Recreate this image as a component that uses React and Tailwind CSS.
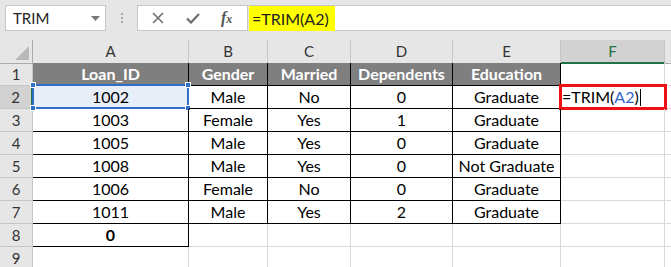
import { Fragment } from 'react'

const cols = ['A', 'B', 'C', 'D', 'E', 'F']

const rows = [
  ['Loan_ID', 'Gender', 'Married', 'Dependents', 'Education'],
  ['1002', 'Male', 'No', '0', 'Graduate'],
  ['1003', 'Female', 'Yes', '1', 'Graduate'],
  ['1005', 'Male', 'Yes', '0', 'Graduate'],
  ['1008', 'Male', 'Yes', '0', 'Not Graduate'],
  ['1006', 'Female', 'No', '0', 'Graduate'],
  ['1011', 'Male', 'Yes', '2', 'Graduate'],
  ['0'],
  [],
]

const font = { fontFamily: 'Lato, "Liberation Sans", sans-serif' }

function Corner({ className }) {
  return <span className={`absolute w-[6px] h-[6px] bg-[#2f6fc7] border border-white ${className}`} />
}

export default function App() {
  return (
    <div className="w-[671px] h-[267px] overflow-hidden bg-white text-[16px] text-black" style={font}>
      {/* formula bar */}
      <div className="h-[40px] bg-[#e6e6e6] flex items-start pt-[5px] pl-[5px]">
        <div className="w-[101px] h-[26px] bg-white border border-[#c6c6c6] flex items-center pl-[7px] pr-[5px] text-[15px] text-[#222]">
          <span className="flex-1">TRIM</span>
          <svg width="9" height="5" viewBox="0 0 9 5"><path d="M0 0h9L4.5 5z" fill="#7a7a7a" /></svg>
        </div>
        <div className="w-[31px] h-[26px] flex flex-col items-center justify-center gap-[2px]">
          <span className="w-[2px] h-[2px] bg-[#aaa]" />
          <span className="w-[2px] h-[2px] bg-[#aaa]" />
          <span className="w-[2px] h-[2px] bg-[#aaa]" />
        </div>
        <div className="w-[111px] h-[26px] bg-white border border-[#c6c6c6] flex items-center">
          <svg className="ml-[14px]" width="12" height="12" viewBox="0 0 12 12"><path d="M1 1l10 10M11 1L1 11" stroke="#6e6e6e" strokeWidth="1.6" /></svg>
          <svg className="ml-[22px]" width="14" height="11" viewBox="0 0 14 11"><path d="M1 5.5l4 4L13 1" stroke="#6e6e6e" strokeWidth="2.2" fill="none" /></svg>
          <span className="ml-[21px] text-[16px] italic font-bold text-[#555]" style={{ fontFamily: '"Liberation Serif", serif' }}>f<span className="text-[12px]">x</span></span>
        </div>
        <div className="flex-1 h-[26px] bg-white border-y border-[#c6c6c6] ml-[1px] flex items-stretch">
          <div className="bg-[#ffff00] w-[86px] h-[25px] flex items-center pl-[3px] text-[16px] text-[#222]">=TRIM(A2)</div>
        </div>
      </div>

      {/* sheet */}
      <div className="grid grid-cols-[33px_156px_79px_83px_102px_108px_104px_1fr] auto-rows-[23px]">
        <div className="relative h-[24px] bg-[#e6e6e6] border-r border-b border-[#ababab]">
          <svg className="absolute right-[3px] bottom-[3px]" width="14" height="14" viewBox="0 0 14 14"><path d="M14 0V14H0z" fill="#b9b9b9" /></svg>
        </div>
        {cols.map(c => (
          <div key={c}
            className={`h-[24px] flex items-center justify-center border-r border-[#c6c6c6] text-[15px] ${c === 'F' ? 'bg-[#d2d2d2] border-b-2 border-b-[#217346] text-[#217346]' : 'bg-[#e6e6e6] border-b border-b-[#ababab] text-[#333]'}`}>
            {c}
          </div>
        ))}
        <div className="h-[24px] bg-[#e6e6e6] border-b border-[#ababab]" />

        {rows.map((r, i) => (
          <Fragment key={i}>
            <div className={`flex items-center justify-center border-b border-r border-[#c6c6c6] text-[15px] text-[#333] ${i === 1 ? 'bg-[#d2d2d2] border-r-2 border-r-[#217346]' : 'bg-[#e6e6e6]'}`}>
              {i + 1}
            </div>
            {[0, 1, 2, 3, 4].map(j => {
              const inTable = i < 7 || (i === 7 && j === 0)
              const header = i === 0
              return (
                <div key={j}
                  className={`relative flex items-center justify-center border-r border-b ${inTable ? 'border-black' : 'border-[#d9d9d9]'} ${header ? 'bg-[#7f7f7f] text-white font-bold' : ''} ${i === 7 ? 'font-bold' : ''} ${i === 1 && j === 0 ? 'bg-[#e8eef8]' : ''}`}>
                  {r[j]}
                  {i === 1 && j === 0 && (
                    <div className="absolute -left-[1px] -top-[2px] -right-[1px] -bottom-[1px] border-2 border-[#2f6fc7]">
                      <Corner className="-left-[4px] -top-[4px]" />
                      <Corner className="-right-[4px] -top-[4px]" />
                      <Corner className="-left-[4px] -bottom-[4px]" />
                      <Corner className="-right-[4px] -bottom-[4px]" />
                    </div>
                  )}
                </div>
              )
            })}
            <div className="relative flex items-center border-r border-b border-[#d9d9d9]">
              {i === 1 && (
                <>
                  <span className="pl-[1px]">=TRIM(<span className="text-[#3366cc]">A2</span>)</span>
                  <span className="w-[1px] h-[17px] bg-black ml-[1px]" />
                  <div className="absolute -left-[2px] -top-[2px] -right-[3px] -bottom-[2px] border-[3px] border-[#ee1111]" />
                </>
              )}
            </div>
            <div className="border-b border-[#d9d9d9]" />
          </Fragment>
        ))}
      </div>
    </div>
  )
}
